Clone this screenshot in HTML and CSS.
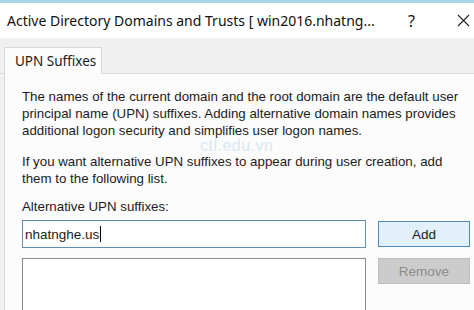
FILE: index.html
```html
<!DOCTYPE html>
<html lang="en">
    <head>
        <meta charset="UTF-8">
        <meta name="viewport" content="width=device-width, initial-scale=1.0">
        <title>UPN Suffixes</title>
        <link rel="stylesheet" href="styles.css">
    </head>
    <body>
        <div class="dialog">
            <div class="titlebar">
                <span class="title">Active Directory Domains and Trusts [ win2016.nhatng...</span>
                <span class="helpBtn">?</span>
                <span class="closeBtn">
                    <svg width="13" height="13" viewBox="0 0 13 13">
                        <path d="M1 1 12 12M12 1 1 12" stroke="#222" stroke-width="1.1" fill="none"/>
                    </svg>
                </span>
            </div>
            <div class="tabstrip">
                <div class="tab">UPN Suffixes</div>
            </div>
            <div class="panel">
                <p class="desc">The names of the current domain and the root domain are the default user<br>principal name (UPN) suffixes. Adding alternative domain names provides<br>additional logon security and simplifies user logon names.</p>
                <div class="watermark">ctl.edu.vn</div>
                <p class="desc">If you want alternative UPN suffixes to appear during user creation, add<br>them to the following list.</p>
                <label class="fieldLabel">Alternative UPN suffixes:</label>
                <div class="suffixGrid">
                    <div class="textbox">nhatnghe.us<span class="caret"></span></div>
                    <div class="btn btnAdd">Add</div>
                    <div class="listbox"></div>
                    <div class="btn btnDisabled">Remove</div>
                </div>
            </div>
        </div>
    </body>
</html>
```

FILE: styles.css
```css
html, body {
    margin: 0;
    padding: 0;
}
body {
    width: 474px;
    height: 310px;
    overflow: hidden;
    background: #f0f0f0;
    font-family: "Liberation Sans", Arial, sans-serif;
    color: #1b1b1b;
}
.dialog {
    height: 310px;
    display: flex;
    flex-direction: column;
}
.titlebar {
    flex-shrink: 0;
    height: 35px;
    border-top: 3px solid #a8d5e8;
    background: #fff;
    display: flex;
    align-items: center;
    padding-left: 7px;
    font-family: "Noto Sans", "Open Sans", sans-serif;
    font-size: 14px;
    color: #111;
}
.title {
    width: 401px;
    white-space: nowrap;
}
.helpBtn {
    width: 49px;
    font-size: 16px;
}
.closeBtn {
    display: flex;
    align-items: center;
}
.tabstrip {
    flex-shrink: 0;
    height: 35px;
    display: flex;
    align-items: flex-end;
    padding-left: 4px;
    border-bottom: 1px solid #d9d9d9;
}
.tab {
    width: 86px;
    height: 26px;
    padding-left: 10px;
    background: #fcfcfc;
    border: 1px solid #d9d9d9;
    border-bottom: none;
    margin-bottom: -1px;
    font-family: "Noto Sans", "Open Sans", sans-serif;
    font-size: 13.5px;
    line-height: 26px;
}
.panel {
    flex: 1;
    min-height: 0;
    overflow: hidden;
    margin-left: 4px;
    background: #fcfcfc;
    border-left: 1px solid #d9d9d9;
    padding: 14px 0 0 17px;
    font-size: 13.3px;
}
.desc {
    margin: 0;
    line-height: 17px;
    white-space: nowrap;
}
.watermark {
    height: 14px;
    padding-left: 178px;
    font-size: 16px;
    line-height: 14px;
    letter-spacing: 0.5px;
    color: #d6e8f2;
}
.fieldLabel {
    display: block;
    margin-top: 11px;
    line-height: 17px;
}
.suffixGrid {
    display: grid;
    grid-template-columns: 344px 92px;
    column-gap: 12px;
    row-gap: 10px;
    margin-top: 5px;
}
.textbox {
    height: 26px;
    border: 1px solid #5f8fb2;
    background: #fff;
    display: flex;
    align-items: center;
    padding-left: 2px;
    font-size: 13.5px;
}
.caret {
    width: 1px;
    height: 16px;
    margin-left: 1px;
    background: #000;
}
.btn {
    height: 24px;
    display: flex;
    align-items: center;
    justify-content: center;
    font-size: 13.5px;
}
.btnAdd {
    margin-top: 1px;
    border: 1px solid #4e8bbd;
    background: #e2f0fb;
}
.btnDisabled {
    border: 1px solid #bfbfbf;
    background: #cccccc;
    color: #8c8c8c;
}
.listbox {
    height: 60px;
    border: 1px solid #8a8a8a;
    border-bottom: none;
    background: #fff;
}
```
